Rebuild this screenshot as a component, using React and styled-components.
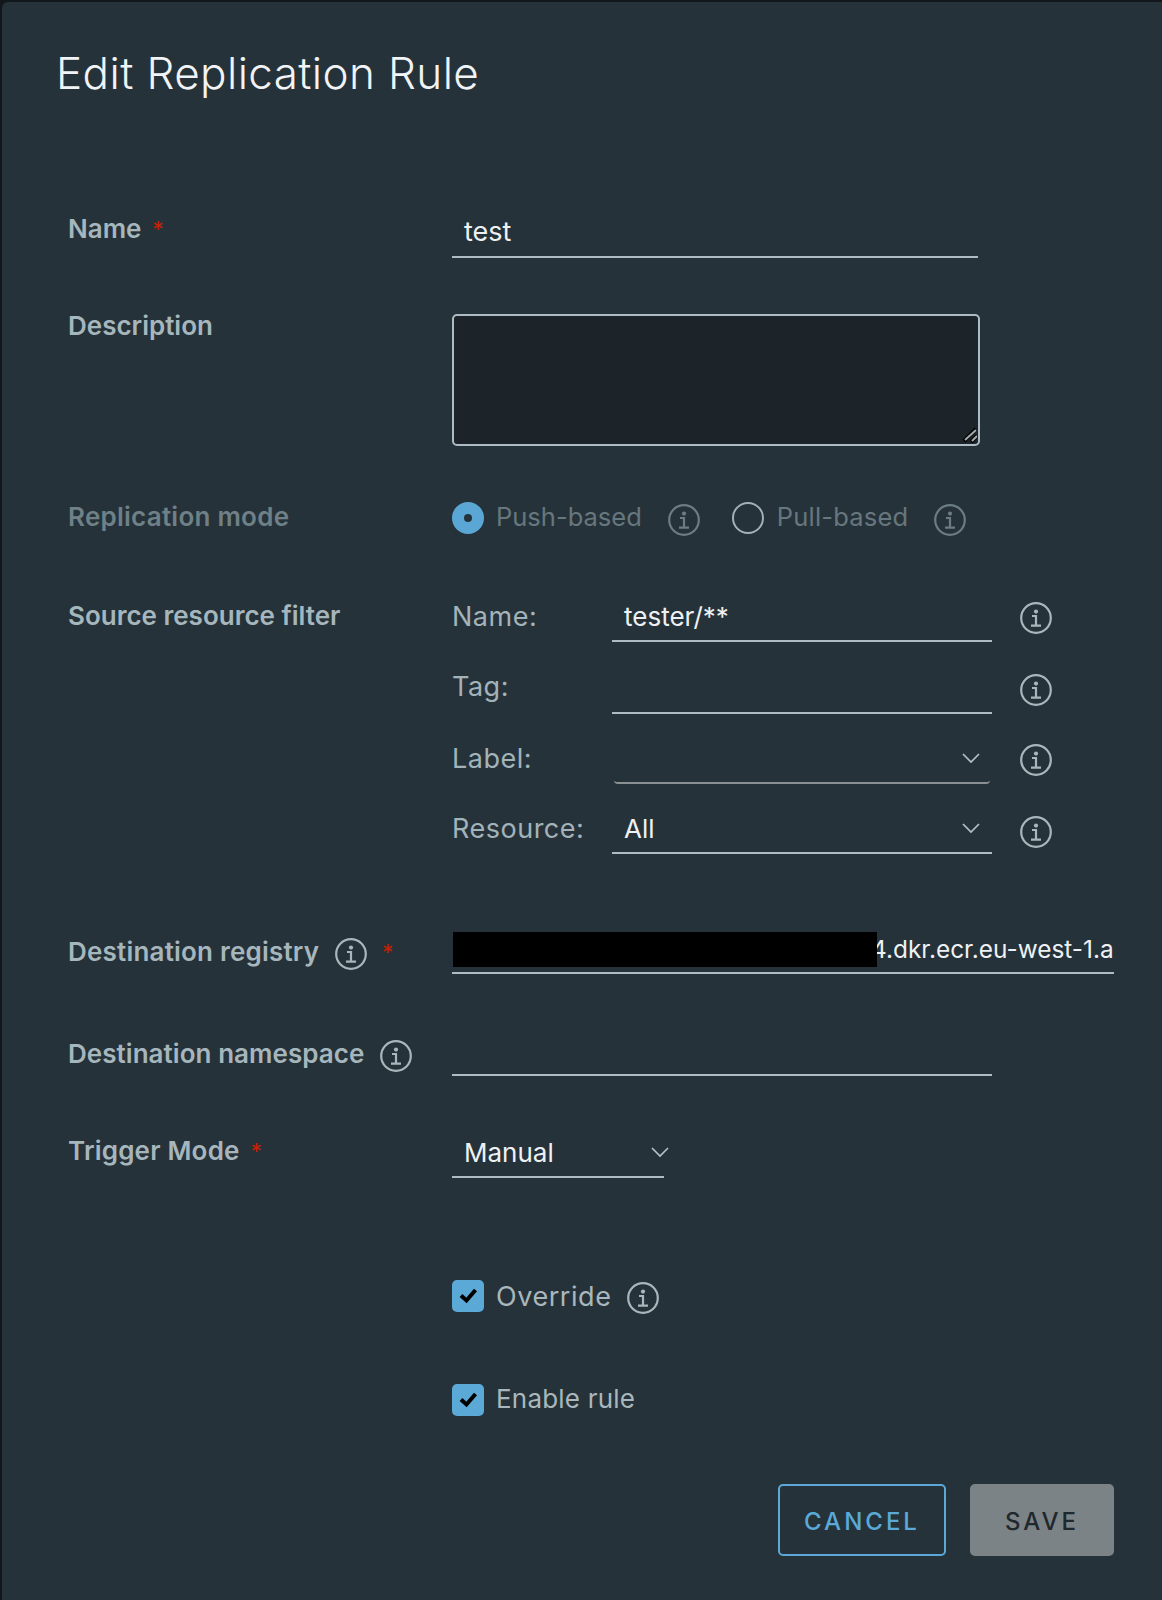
import React from "react";
import styled, { createGlobalStyle } from "styled-components";

const Global = createGlobalStyle`
  html, body { margin: 0; padding: 0; background: #12171b; }
  body { width: 1162px; height: 1600px; overflow: hidden; font-family: Inter, "Open Sans", sans-serif; }
  * { box-sizing: border-box; }
`;

const Panel = styled.div`
  margin: 2px 0 0 2px;
  height: 1598px;
  padding: 0 48px 0 55px;
  background: #263239;
  border-radius: 6px 0 0 0;
`;
const Title = styled.h1`
  margin: 0;
  padding-top: 45px;
  height: 212px;
  margin-left: -1px;
  font-size: 44px;
  line-height: 52px;
  font-weight: 300;
  letter-spacing: 0.4px;
  color: #f1f4f6;
`;
const Form = styled.form`
  display: flex;
  flex-direction: column;
  margin-left: 12px;
`;
const Row = styled.div`
  display: grid;
  grid-template-columns: 383px 1fr;
  margin-top: ${(p) => p.$top || 0}px;
`;
const LabelCell = styled.div`
  display: flex;
  align-items: flex-start;
  gap: 16px;
  margin-left: -1px;
  margin-top: ${(p) => p.$shift || 0}px;
  height: 30px;
`;
const RowLabel = styled.label`
  font-size: 26px;
  line-height: 30px;
  font-weight: 600;
  letter-spacing: ${(p) => p.$track || 0}px;
  white-space: nowrap;
  color: ${(p) => (p.$dim ? "#6f8087" : "#a6b6bd")};
`;
const Star = styled.span`
  font-size: 22px;
  line-height: 30px;
  color: #c92100;
  margin-left: ${(p) => p.$gap || 0}px;
`;
const Field = styled.div`
  position: relative;
  width: ${(p) => p.$w}px;
  height: 44px;
  padding: ${(p) => p.$pad ?? 4}px 0 0 ${(p) => p.$left ?? 12}px;
  border-bottom: 2px solid #adbbc4;
  font-size: ${(p) => p.$size || 26}px;
  line-height: 30px;
  color: #eef1f3;
  white-space: nowrap;
`;
const LabelField = styled(Field)`
  width: 376px;
  margin: 0 2px;
  border-bottom-color: #8b9193;
  border-radius: 0 0 4px 4px;
`;
const Chevron = styled.svg`
  position: absolute;
  right: ${(p) => p.$right}px;
  top: ${(p) => p.$y}px;
  width: 20px;
  height: 12px;
  fill: none;
  stroke: #b3c0c6;
  stroke-width: 1.7;
`;
const Redaction = styled.div`
  position: absolute;
  left: 1px;
  top: 2px;
  width: 424px;
  height: 35px;
  background: #000;
`;
const AreaWrap = styled.div`
  position: relative;
  width: 528px;
  height: 132px;
`;
const Area = styled.textarea`
  display: block;
  width: 100%;
  height: 100%;
  background: #1c2329;
  border: 2px solid #adbbc4;
  border-radius: 5px;
  outline: none;
  resize: none;
`;
const Grip = styled.svg`
  position: absolute;
  right: 3px;
  bottom: 3px;
  width: 20px;
  height: 20px;
  fill: none;
`;
const InlineGroup = styled.div`
  display: flex;
  align-items: flex-start;
  height: 32px;
`;
const Radio = styled.span`
  flex: none;
  width: 32px;
  height: 32px;
  margin-left: ${(p) => p.$left || 0}px;
  border-radius: 50%;
  display: flex;
  align-items: center;
  justify-content: center;
  background: ${(p) => (p.$on ? "#5aa7d6" : "transparent")};
  border: ${(p) => (p.$on ? "none" : "2px solid #a3b1b7")};
  &::after {
    content: "";
    display: ${(p) => (p.$on ? "block" : "none")};
    width: 8px;
    height: 8px;
    border-radius: 50%;
    background: #263239;
  }
`;
const OptionText = styled.span`
  font-size: ${(p) => p.$size || 25.5}px;
  line-height: 30px;
  margin-left: ${(p) => p.$left || 0}px;
  margin-top: ${(p) => p.$mt || 0}px;
  letter-spacing: ${(p) => p.$track || 0}px;
  color: ${(p) => (p.$dim ? "#66777e" : "#a9b7bc")};
  white-space: nowrap;
`;
const Filters = styled.div`
  display: flex;
  flex-direction: column;
`;
const FilterRow = styled.div`
  display: grid;
  grid-template-columns: 160px 380px 28px 32px;
  margin-top: ${(p) => p.$top || 0}px;
`;
const FilterLabel = styled.span`
  font-size: 27px;
  line-height: 30px;
  letter-spacing: 0.5px;
  padding-top: ${(p) => p.$pad ?? 4}px;
  color: #a3b3ba;
`;
const Actions = styled.div`
  display: flex;
  justify-content: flex-end;
  gap: 24px;
  margin-top: 68px;
`;
const Button = styled.button`
  height: 72px;
  width: ${(p) => p.$w}px;
  padding: 3px 0 0;
  border-radius: 5px;
  font-family: inherit;
  font-size: 24px;
  font-weight: 500;
  letter-spacing: 3px;
  border: 2px solid ${(p) => (p.$primary ? "#7b8386" : "#5aa9d6")};
  background: ${(p) => (p.$primary ? "#7b8386" : "transparent")};
  color: ${(p) => (p.$primary ? "#1e282d" : "#5aa9d6")};
`;
const Box = styled.span`
  flex: none;
  width: 32px;
  height: 32px;
  border-radius: 5px;
  background: #5ba9d6;
`;
const IconSvg = styled.svg`
  flex: none;
  width: 32px;
  height: 32px;
  margin-left: ${(p) => p.$left || 0}px;
  margin-top: ${(p) => p.$mt || 0}px;
  fill: none;
  color: ${(p) => (p.$dim ? "#6b7c83" : "#a9b7bc")};
  stroke: currentColor;
  stroke-width: 2.2;
`;

const Info = (props) => (
  <IconSvg viewBox="0 0 32 32" {...props}>
    <circle cx="16" cy="16" r="14.8" />
    <circle cx="16" cy="9.6" r="2.1" fill="currentColor" stroke="none" />
    <path d="M12 14H16V23.4M11 23.6H21" />
  </IconSvg>
);
const Down = ({ right, y }) => (
  <Chevron viewBox="0 0 20 12" $right={right} $y={y}>
    <path d="M2 2L10 10L18 2" />
  </Chevron>
);
const Check = () => (
  <Box>
    <svg width="32" height="32" viewBox="0 0 32 32">
      <path d="M9 15.5L14.5 20.5L23.5 10" fill="none" stroke="#000" strokeWidth="4" />
    </svg>
  </Box>
);

export default function App() {
  return (
    <>
      <Global />
      <Panel>
        <Title>Edit Replication Rule</Title>
        <Form>
          <Row>
            <LabelCell>
              <RowLabel>Name</RowLabel>
              <Star $gap={-5}>*</Star>
            </LabelCell>
            <Field $w={526} $pad={3} $size={27}>test</Field>
          </Row>
          <Row $top={56}>
            <LabelCell $shift={-3}>
              <RowLabel>Description</RowLabel>
            </LabelCell>
            <AreaWrap>
              <Area readOnly />
              <Grip viewBox="0 0 20 20">
                <path d="M7 18L19 6M14 19L20 13" stroke="#000" strokeWidth="4" />
                <path d="M8 17L19 7M15 18L20 13" stroke="#a3a8aa" strokeWidth="2" />
              </Grip>
            </AreaWrap>
          </Row>
          <Row $top={56}>
            <LabelCell>
              <RowLabel $dim $track={0.25}>Replication mode</RowLabel>
            </LabelCell>
            <InlineGroup>
              <Radio $on />
              <OptionText $dim $left={12}>Push-based</OptionText>
              <Info $dim $left={26} $mt={2} />
              <Radio $left={32} />
              <OptionText $dim $left={13} $track={0.2}>Pull-based</OptionText>
              <Info $dim $left={26} $mt={2} />
            </InlineGroup>
          </Row>
          <Row $top={64}>
            <LabelCell $shift={3}>
              <RowLabel>Source resource filter</RowLabel>
            </LabelCell>
            <Filters>
              <FilterRow>
                <FilterLabel>Name:</FilterLabel>
                <Field $w={380}>tester/**</Field>
                <span />
                <Info $mt={4} />
              </FilterRow>
              <FilterRow $top={28}>
                <FilterLabel $pad={2}>Tag:</FilterLabel>
                <Field $w={380} />
                <span />
                <Info $mt={4} />
              </FilterRow>
              <FilterRow $top={26}>
                <FilterLabel>Label:</FilterLabel>
                <LabelField>
                  <Down right={9} y={12} />
                </LabelField>
                <span />
                <Info $mt={4} />
              </FilterRow>
              <FilterRow $top={26}>
                <FilterLabel>Resource:</FilterLabel>
                <Field $w={380}>
                  All
                  <Down right={11} y={12} />
                </Field>
                <span />
                <Info $mt={6} />
              </FilterRow>
            </Filters>
          </Row>
          <Row $top={76}>
            <LabelCell $shift={7}>
              <RowLabel $track={0.2}>Destination registry</RowLabel>
              <Info $mt={1} />
              <Star $gap={-1}>*</Star>
            </LabelCell>
            <Field $w={662} $left={419} $size={24.4}>
              4.dkr.ecr.eu-west-1.a
              <Redaction />
            </Field>
          </Row>
          <Row $top={58}>
            <LabelCell $shift={7}>
              <RowLabel $track={0.05}>Destination namespace</RowLabel>
              <Info $mt={1} />
            </LabelCell>
            <Field $w={540} />
          </Row>
          <Row $top={58}>
            <LabelCell $shift={2}>
              <RowLabel $track={0.2}>Trigger Mode</RowLabel>
              <Star $gap={-5}>*</Star>
            </LabelCell>
            <Field $w={212}>
              Manual
              <Down right={-6} y={12} />
            </Field>
          </Row>
          <Row $top={102}>
            <span />
            <InlineGroup>
              <Check />
              <OptionText $left={12} $size={27} $track={0.55} $mt={2}>Override</OptionText>
              <Info $left={16} $mt={2} />
            </InlineGroup>
          </Row>
          <Row $top={72}>
            <span />
            <InlineGroup>
              <Check />
              <OptionText $left={12} $size={26} $track={0.2}>Enable rule</OptionText>
            </InlineGroup>
          </Row>
          <Actions>
            <Button type="button" $w={168}>CANCEL</Button>
            <Button type="button" $w={144} $primary>SAVE</Button>
          </Actions>
        </Form>
      </Panel>
    </>
  );
}
